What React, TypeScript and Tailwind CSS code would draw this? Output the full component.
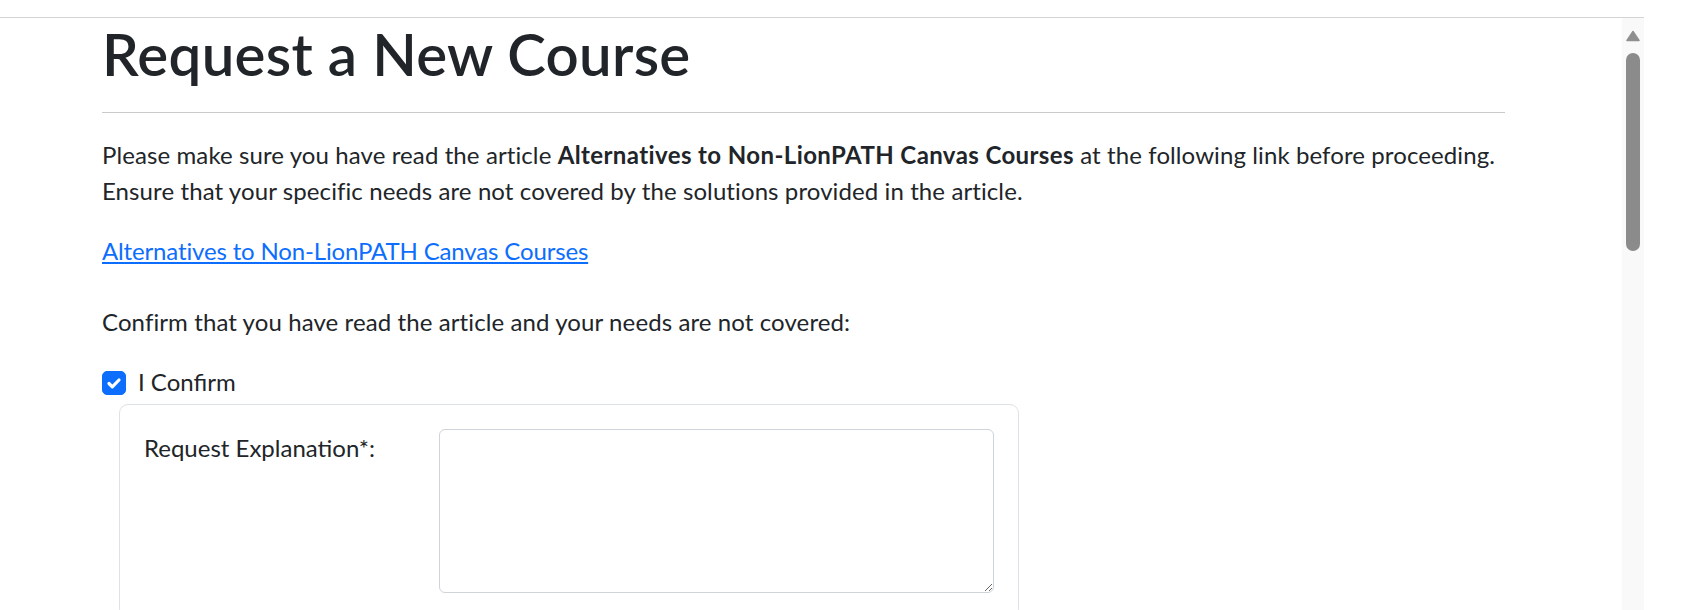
import * as React from "react";

function Scrollbar() {
  return (
    <div className="flex w-[22px] shrink-0 flex-col items-center bg-[#f9f9f9]">
      <svg className="mt-[12px]" width="14" height="12" viewBox="0 0 14 12">
        <path d="M7 1.5 L13 10.5 H1 Z" fill="#8f8f8f" stroke="#8f8f8f" strokeWidth="1.5" strokeLinejoin="round" />
      </svg>
      <div className="mt-[11px] h-[198px] w-[14px] rounded-full bg-[#8b8b8b]" />
    </div>
  );
}

export default function App() {
  const [confirmed, setConfirmed] = React.useState(true);

  return (
    <div className="flex h-[610px] w-[1683px] overflow-hidden bg-white font-['Lato',sans-serif] text-[24px] leading-[36px] text-[#212529]">
      <div className="mt-[17px] flex w-[1644px] border-t border-[#d4d4d4]">
        <main className="w-[1622px] pl-[102px]">
          <div className="w-[1403px]">
            <h1 className="mt-[1px] text-[58.2px] leading-[70px] font-semibold tracking-[0.3px]">Request a New Course</h1>
            <hr className="mt-[23px] border-t border-[#c9cacc]" />

            <p className="mt-[24px] whitespace-nowrap tracking-[0.1px]">
              Please make sure you have read the article <strong className="font-bold tracking-[0.4px]">Alternatives to Non-LionPATH Canvas Courses</strong> at the following link before proceeding.
              <br />
              Ensure that your specific needs are not covered by the solutions provided in the article.
            </p>

            <p className="mt-[24px]">
              <a href="#" className="tracking-[-0.15px] text-[#0d6efd] underline">Alternatives to Non-LionPATH Canvas Courses</a>
            </p>

            <p className="mt-[35px] tracking-[0.1px]">Confirm that you have read the article and your needs are not covered:</p>

            <label className="mt-[24px] flex cursor-pointer items-start">
              <span
                onClick={() => setConfirmed(!confirmed)}
                className={`mt-[7px] flex h-[24px] w-[24px] items-center justify-center rounded-[5px] border ${confirmed ? "border-[#0d6efd] bg-[#0d6efd]" : "border-[#adb5bd] bg-white"}`}
              >
                {confirmed && (
                  <svg width="20" height="20" viewBox="0 0 20 20">
                    <path d="M5 10.5l3.3 3.3L15 7" fill="none" stroke="#fff" strokeWidth="3.2" strokeLinecap="round" strokeLinejoin="round" />
                  </svg>
                )}
              </span>
              <span className="ml-[12px]">I Confirm</span>
            </label>

            <div className="mt-[4px] ml-[17px] w-[900px] rounded-[9px] border border-[#dee2e6] p-[24px]">
              <div className="flex">
                <label className="w-[295px] pt-[1px]">Request Explanation*:</label>
                <textarea className="h-[164px] w-[555px] rounded-[6px] border border-[#ced4da] px-[18px] py-[9px] outline-none" />
              </div>
            </div>
          </div>
        </main>
        <Scrollbar />
      </div>
    </div>
  );
}
